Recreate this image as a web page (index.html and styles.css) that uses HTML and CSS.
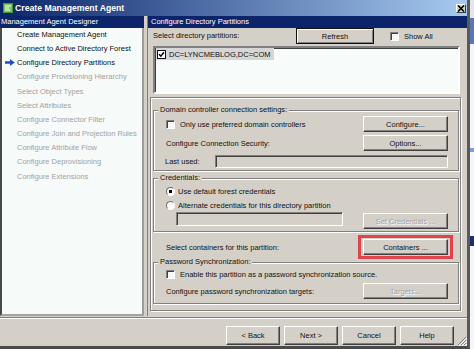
FILE: index.html
```html
<!DOCTYPE html>
<html lang="en">
<head>
    <meta charset="UTF-8">
    <title>Create Management Agent</title>
    <link rel="stylesheet" href="styles.css">
</head>
<body>
    <div class="window">
        <div class="titlebar">
            <svg class="app-icon" viewBox="0 0 10 10">
                <rect x="0" y="0" width="10" height="10" fill="#3f9a3a"/>
                <rect x="1" y="1" width="8" height="8" fill="#7cc65a"/>
                <path d="M2 3h6M2 5h4M2 7h5" stroke="#fff" stroke-width="1"/>
            </svg>
            <span class="title">Create Management Agent</span>
            <span class="close">
                <svg viewBox="0 0 8 7" width="8" height="7"><path d="M1 0.5l6 6M7 0.5l-6 6" stroke="#000" stroke-width="1.6"/></svg>
            </span>
        </div>

        <div class="main">
            <div class="nav">
                <div class="nav-head">Management Agent Designer</div>
                <ul class="steps">
                    <li>Create Management Agent</li>
                    <li>Connect to Active Directory Forest</li>
                    <li class="current">
                        <svg class="arrow" viewBox="0 0 10 7"><path d="M0 2.2h5V0l4.8 3.5L5 7V4.8H0z" fill="#1d4fc4"/></svg>Configure Directory Partitions
                    </li>
                    <li class="off">Configure Provisioning Hierarchy</li>
                    <li class="off">Select Object Types</li>
                    <li class="off">Select Attributes</li>
                    <li class="off">Configure Connector Filter</li>
                    <li class="off">Configure Join and Projection Rules</li>
                    <li class="off">Configure Attribute Flow</li>
                    <li class="off">Configure Deprovisioning</li>
                    <li class="off">Configure Extensions</li>
                </ul>
            </div>

            <div class="page">
                <div class="page-head">Configure Directory Partitions</div>
                <div class="page-content">
                    <div class="partitions-row">
                        <span class="partitions-label">Select directory partitions:</span>
                        <span class="btn btn-default refresh">Refresh</span>
                        <span class="show-all"><span class="checkbox"></span>Show All</span>
                    </div>

                    <div class="listbox">
                        <div class="list-item">
                            <span class="checkbox checked">
                                <svg viewBox="0 0 7 7" width="7" height="7"><path d="M1 3.3l1.8 1.9L6 1.2" fill="none" stroke="#000" stroke-width="1.5"/></svg>
                            </span>DC=LYNCMEBLOG,DC=COM
                        </div>
                    </div>

                    <div class="settings">
                        <div class="group dc-group">
                            <span class="group-label">Domain controller connection settings:</span>
                            <div class="row row-a">
                                <span class="checkbox"></span><span class="check-text">Only use preferred domain controllers</span>
                                <span class="btn side-btn">Configure...</span>
                            </div>
                            <div class="row row-b">
                                <span>Configure Connection Security:</span>
                                <span class="btn side-btn">Options...</span>
                            </div>
                            <div class="row row-c">
                                <span class="last-used">Last used:</span>
                                <span class="textbox last-box"></span>
                            </div>
                        </div>

                        <div class="group cred-group">
                            <span class="group-label">Credentials:</span>
                            <div class="row radio-row">
                                <span class="radio checked"></span><span class="check-text">Use default forest credentials</span>
                            </div>
                            <div class="row radio-row">
                                <span class="radio"></span><span class="check-text">Alternate credentials for this directory partition</span>
                            </div>
                            <div class="row cred-row">
                                <span class="textbox cred-box"></span>
                                <span class="btn side-btn disabled">Set Credentials ...</span>
                            </div>
                        </div>

                        <div class="containers-row">
                            <span>Select containers for this partition:</span>
                            <span class="highlight"><span class="btn side-btn">Containers ...</span></span>
                        </div>

                        <div class="group pwd-group">
                            <span class="group-label">Password Synchronization:</span>
                            <div class="row pwd-check">
                                <span class="checkbox"></span><span class="check-text">Enable this partition as a password synchronization source.</span>
                            </div>
                            <div class="row pwd-targets">
                                <span>Configure password synchronization targets:</span>
                                <span class="btn side-btn disabled">Targets...</span>
                            </div>
                        </div>
                    </div>
                </div>
            </div>
        </div>

        <div class="footer">
            <span class="btn footer-btn">&lt; Back</span>
            <span class="btn footer-btn">Next &gt;</span>
            <span class="btn footer-btn">Cancel</span>
            <span class="btn footer-btn">Help</span>
            <svg class="grip" viewBox="0 0 10 10">
                <path d="M9 1L1 9M9 4L4 9M9 7L7 9" stroke="#808080" stroke-width="1"/>
                <path d="M10 2L2 10M10 5L5 10M10 8L8 10" stroke="#fff" stroke-width="1"/>
            </svg>
        </div>
    </div>
</body>
</html>
```

FILE: styles.css
```css
* {
    box-sizing: border-box;
}

body {
    margin: 0;
    width: 474px;
    height: 349px;
    overflow: hidden;
    font-family: "Liberation Sans", Arial, sans-serif;
    font-size: 7.5px;
    color: #111;
    background: linear-gradient(to bottom,
        #e6e6e6 0, #e6e6e6 18px,
        #5a78b8 18px, #5a78b8 44px,
        #f4f6fa 44px, #f4f6fa 148px,
        #7f9cd0 148px, #7f9cd0 152px,
        #f4f6fa 152px, #f4f6fa 236px,
        #1c2f70 236px, #1c2f70 246px,
        #f4f6fa 246px);
}

.window {
    width: 470px;
    height: 349px;
    background-color: #d4d0c8;
    border-right: 3px solid #5a5a5a;
    border-bottom: 3px solid #4a4a4a;
    display: flex;
    flex-direction: column;
}

/* title bar */

.titlebar {
    height: 16px;
    flex: none;
    display: flex;
    align-items: center;
    padding: 0 1px 0 3px;
    background: linear-gradient(to right, #0a246a, #a6caf0);
    color: white;
}

.app-icon {
    width: 10px;
    height: 10px;
    margin-right: 2px;
}

.title {
    flex: 1;
    font-weight: bold;
    font-size: 8.7px;
}

.close {
    width: 10px;
    height: 9px;
    display: flex;
    align-items: center;
    justify-content: center;
    background-color: #d4d0c8;
    border: 1px solid;
    border-color: #fff #404040 #404040 #fff;
}

/* main area */

.main {
    height: 300px;
    flex: none;
    display: flex;
    gap: 3px;
}

.nav {
    width: 144px;
    display: flex;
    flex-direction: column;
}

.nav-head,
.page-head {
    height: 12px;
    line-height: 12px;
    background-color: #0c246a;
    color: white;
    white-space: nowrap;
    overflow: hidden;
}

.nav-head {
    padding-left: 1px;
}

.page-head {
    padding-left: 3px;
}

.steps {
    flex: 1;
    margin: 0;
    padding: 0 0 0 15px;
    list-style: none;
    background-color: #f6faf8;
    border-left: 2px solid #4a4a4a;
    border-right: 2px solid #9c9c9c;
    border-bottom: 2px solid #a4a4a4;
}

.steps li {
    line-height: 14.15px;
    white-space: nowrap;
    color: #111;
}

.steps li.off {
    color: #a2a2a2;
}

.arrow {
    width: 10px;
    height: 7px;
    margin-left: -12px;
    margin-right: 2px;
    vertical-align: -1px;
}

.page {
    flex: 1;
    display: flex;
    flex-direction: column;
    border-left: 1px solid #808080;
}

.page-content {
    flex: 1;
    padding: 0 2px;
    display: flex;
    flex-direction: column;
}

/* partitions */

.partitions-row {
    height: 18px;
    margin: 0 5px 0 3px;
    display: flex;
    align-items: flex-start;
}

.partitions-label {
    width: 143px;
    line-height: 16px;
}

.refresh {
    width: 78px;
}

.show-all {
    margin-left: 16px;
    height: 16px;
    display: flex;
    align-items: center;
}

.listbox {
    height: 48px;
    margin: 0 5px 0 3px;
    background-color: #f7fbf9;
    border: 2px solid;
    border-color: #808080 #fff #fff #808080;
    box-shadow: inset 1px 1px #404040;
}

.list-item {
    width: fit-content;
    height: 12px;
    margin-left: 1px;
    padding: 0 3px 0 1px;
    display: flex;
    align-items: center;
    background-color: #d6d6d6;
}

/* controls */

.checkbox {
    width: 9px;
    height: 9px;
    flex: none;
    margin-right: 5px;
    background-color: #f8f8f8;
    border: 1px solid;
    border-color: #808080 #fff #fff #808080;
    box-shadow: inset 1px 1px #404040;
}

.checkbox.checked {
    margin-right: 3px;
    border: 1px solid #111;
    box-shadow: none;
    background-color: #fff;
    display: flex;
    align-items: center;
    justify-content: center;
}

.radio {
    width: 9px;
    height: 9px;
    flex: none;
    margin-right: 3px;
    border-radius: 50%;
    background-color: #fafafa;
    border: 1px solid;
    border-color: #707070 #fff #fff #707070;
}

.radio.checked {
    background: radial-gradient(circle, #000 0, #000 1.6px, #fafafa 2px);
}

.check-text {
    white-space: nowrap;
}

.btn {
    height: 16px;
    flex: none;
    display: flex;
    align-items: center;
    justify-content: center;
    background-color: #d4d0c8;
    border: 1px solid;
    border-color: #fff #404040 #404040 #fff;
    box-shadow: inset -1px -1px #808080;
    color: #111;
    white-space: nowrap;
}

.btn-default {
    border-color: #111;
    box-shadow: inset 1px 1px #fff, inset -1px -1px #808080;
}

.btn.disabled {
    color: #a4a4a4;
    text-shadow: 1px 1px #fff;
}

.side-btn {
    width: 85px;
    margin-left: auto;
}

.textbox {
    height: 13px;
    background-color: #d4d0c8;
    border: 1px solid;
    border-color: #808080 #fff #fff #808080;
    box-shadow: inset 1px 1px #404040;
}

/* settings frame */

.settings {
    height: 214px;
    margin: 3px 4px 0 0;
    padding: 12px 1px 0 2px;
    border: 1px solid #808080;
    box-shadow: inset 1px 1px #fff, 1px 1px #fff;
    display: flex;
    flex-direction: column;
}

.group {
    border: 1px solid #808080;
    box-shadow: inset 1px 1px #fff, 1px 1px #fff;
    padding: 0 10px 0 12px;
    display: flex;
    flex-direction: column;
}

.group-label {
    display: block;
    width: fit-content;
    height: 10px;
    line-height: 10px;
    margin: -6px 0 0 -8px;
    padding: 0 2px;
    background-color: #d4d0c8;
    white-space: nowrap;
}

.row {
    display: flex;
    align-items: center;
}

.row-a {
    height: 16px;
    margin-top: 1px;
}

.row-b {
    height: 16px;
    margin-top: 3px;
}

.row-c {
    height: 13px;
    margin-top: 4px;
}

.last-used {
    width: 50px;
    margin-left: -1px;
}

.last-box {
    flex: 1;
}

.dc-group {
    padding-bottom: 2px;
}

.cred-group {
    margin-top: 7px;
    padding-bottom: 2px;
}

.radio-row {
    height: 14px;
}

.radio-row:first-of-type {
    margin-top: 1px;
}

.cred-row {
    height: 17px;
    align-items: flex-start;
}

.cred-box {
    width: 167px;
    height: 14px;
    margin-left: 10px;
}

.cred-row .btn {
    margin-top: 1px;
}

.containers-row {
    height: 24px;
    margin-top: 3px;
    padding-left: 13px;
    display: flex;
    align-items: center;
}

.highlight {
    margin-left: auto;
    margin-right: 6px;
    padding: 1px 2px;
    border: 3px solid #e1434d;
}

.pwd-group {
    margin-top: 3px;
    padding-bottom: 4px;
}

.pwd-check {
    height: 14px;
}

.pwd-targets {
    height: 16px;
    margin-top: 2px;
}

/* footer */

.footer {
    flex: 1;
    margin-top: 1px;
    padding-top: 8px;
    border-top: 1px solid #808080;
    box-shadow: inset 0 1px #fff;
    display: flex;
    align-items: flex-start;
    justify-content: flex-end;
    gap: 4px;
}

.footer-btn {
    width: 54px;
    height: 19px;
}

.grip {
    width: 10px;
    height: 10px;
    align-self: flex-end;
    margin-left: -1px;
}
```
